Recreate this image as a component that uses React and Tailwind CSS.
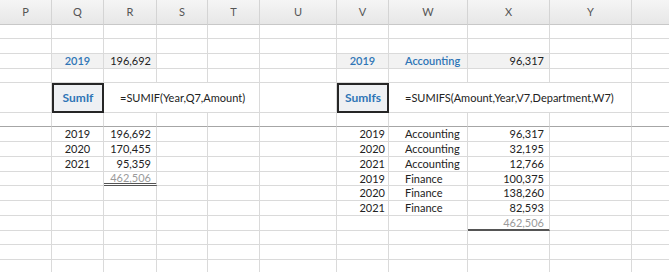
import React from 'react'

const headers = ['P', 'Q', 'R', 'S', 'T', 'U', 'V', 'W', 'X', 'Y', '']

const left = [
  ['2019', '196,692'],
  ['2020', '170,455'],
  ['2021', '95,359'],
]

const right = [
  ['2019', 'Accounting', '96,317'],
  ['2020', 'Accounting', '32,195'],
  ['2021', 'Accounting', '12,766'],
  ['2019', 'Finance', '100,375'],
  ['2020', 'Finance', '138,260'],
  ['2021', 'Finance', '82,593'],
]

const num = 'justify-end pr-[5px]'
const total = 'justify-end pr-[5px] text-[#9a9a9a]'

// each row: 11 columns (P..Y + spare), a cell may span several columns
const blank = (n) => Array.from({ length: n }, () => ({}))

const rows = [
  blank(11),
  blank(11),
  [
    {},
    { t: '2019', c: 'justify-center text-[#2e75b6] font-semibold bg-[#f2f2f2]' },
    { t: '196,692', c: `${num} bg-[#f2f2f2]` },
    {}, {}, {},
    { t: '2019', c: 'justify-center text-[#2e75b6] font-semibold bg-[#f2f2f2]' },
    { t: 'Accounting', c: 'pl-[16px] text-[#2e75b6] font-semibold bg-[#f2f2f2]' },
    { t: '96,317', c: `${num} bg-[#f2f2f2]` },
    {}, {},
  ],
  blank(11),
  [
    {},
    { box: 'SumIf' },
    { t: '=SUMIF(Year,Q7,Amount)', c: 'col-span-3 pl-[16px]' },
    {},
    { box: 'SumIfs' },
    { t: '=SUMIFS(Amount,Year,V7,Department,W7)', c: 'col-span-3 pl-[16px]' },
    {},
  ],
  blank(11).map(() => ({ c: 'border-b-[#a6a6a6]' })),
]

for (let d = 0; d < 11; d++) {
  const row = blank(11)
  if (d < 3) {
    row[1] = { t: left[d][0], c: 'justify-center' }
    row[2] = { t: left[d][1], c: num }
  }
  if (d === 3) {
    row[2] = { t: '462,506', c: `${total} border-b-[3px] border-b-[#555] border-double` }
  }
  if (d < 6) {
    row[6] = { t: right[d][0], c: 'justify-end pr-[3px]' }
    row[7] = { t: right[d][1], c: 'pl-[16px]' }
    row[8] = { t: right[d][2], c: num }
  }
  if (d === 6) {
    row[8] = { t: '462,506', c: `${total} border-b-2 border-b-[#555]` }
  }
  rows.push(row)
}

export default function App() {
  return (
    <div className="w-[669px] h-[272px] overflow-hidden bg-white text-[11px] text-[#222] font-['Lato','Liberation_Sans',sans-serif]">
      <div className="grid grid-cols-[52px_52px_53px_51px_52px_77px_52px_79px_82px_82px_60px] grid-rows-[25px_14px_15px_15px_14px_30px_14px_15px_15px_15px_14px_15px_15px_15px_14px_15px_15px_15px]">
        {/* column header */}
        {headers.map((h, i) => (
          <div
            key={'h' + i}
            className="flex items-center justify-center border-r border-b border-r-[#d4d4d4] border-b-[#c8c8c8] bg-gradient-to-b from-[#f5f5f5] to-[#e7e7e7] text-[11px] text-[#555]"
          >
            {h}
          </div>
        ))}

        {rows.map((row, r) =>
          row.map((cell, i) =>
            cell.box ? (
              <div
                key={r + '-' + i}
                className="flex items-center justify-center border-2 border-[#262626] bg-[#eef0f3] text-[12px] font-bold text-[#2e75b6]"
              >
                {cell.box}
              </div>
            ) : (
              <div
                key={r + '-' + i}
                className={`flex items-center pt-px whitespace-nowrap border-r border-b border-[#dadada] ${cell.c || ''}`}
              >
                {cell.t}
              </div>
            )
          )
        )}
      </div>
    </div>
  )
}
